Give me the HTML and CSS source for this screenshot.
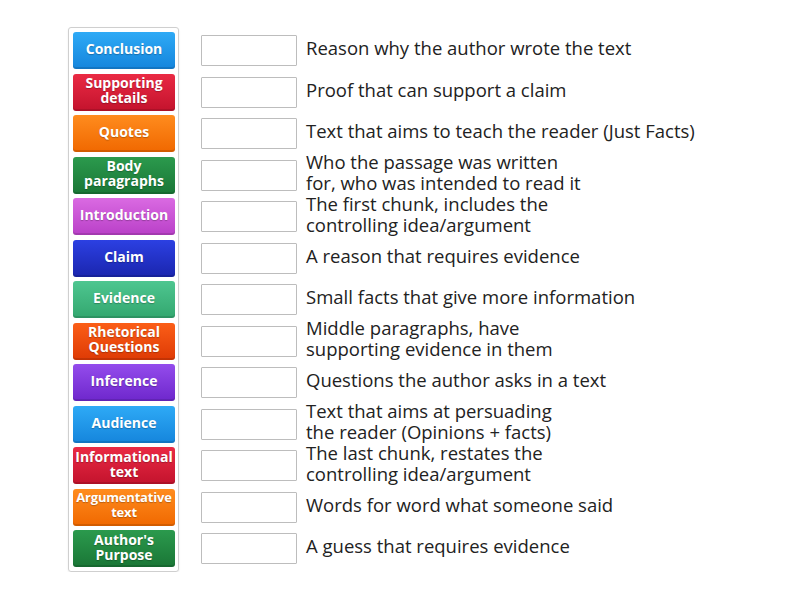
FILE: index.html
```html
<!DOCTYPE html>
<html>
<head>
<meta charset="utf-8">
<link rel="stylesheet" href="styles.css">
</head>
<body>
<div class="page">
  <div class="panel">
    <div class="tile blue">Conclusion</div>
    <div class="tile red">Supporting details</div>
    <div class="tile orange">Quotes</div>
    <div class="tile green">Body paragraphs</div>
    <div class="tile pink">Introduction</div>
    <div class="tile navy">Claim</div>
    <div class="tile teal">Evidence</div>
    <div class="tile redorange">Rhetorical Questions</div>
    <div class="tile purple">Inference</div>
    <div class="tile blue">Audience</div>
    <div class="tile red">Informational text</div>
    <div class="tile orange small">Argumentative text</div>
    <div class="tile green">Author's Purpose</div>
  </div>
  <div class="rows">
    <div class="row"><div class="slot"></div><div class="def">Reason why the author wrote the text</div></div>
    <div class="row"><div class="slot"></div><div class="def">Proof that can support a claim</div></div>
    <div class="row"><div class="slot"></div><div class="def">Text that aims to teach the reader (Just Facts)</div></div>
    <div class="row"><div class="slot"></div><div class="def">Who the passage was written<br>for, who was intended to read it</div></div>
    <div class="row"><div class="slot"></div><div class="def">The first chunk, includes the<br>controlling idea/argument</div></div>
    <div class="row"><div class="slot"></div><div class="def">A reason that requires evidence</div></div>
    <div class="row"><div class="slot"></div><div class="def">Small facts that give more information</div></div>
    <div class="row"><div class="slot"></div><div class="def">Middle paragraphs, have<br>supporting evidence in them</div></div>
    <div class="row"><div class="slot"></div><div class="def">Questions the author asks in a text</div></div>
    <div class="row"><div class="slot"></div><div class="def">Text that aims at persuading<br>the reader (Opinions + facts)</div></div>
    <div class="row"><div class="slot"></div><div class="def">The last chunk, restates the<br>controlling idea/argument</div></div>
    <div class="row"><div class="slot"></div><div class="def">Words for word what someone said</div></div>
    <div class="row"><div class="slot"></div><div class="def">A guess that requires evidence</div></div>
  </div>
</div>
</body>
</html>
```
FILE: styles.css
```css
html, body {
  margin: 0;
  padding: 0;
  background: #ffffff;
}
body {
  font-family: "Open Sans", "Liberation Sans", sans-serif;
}
.page {
  display: flex;
  align-items: flex-start;
  gap: 22px;
  padding: 27px 0 0 68px;
}
.panel {
  display: flex;
  flex-direction: column;
  gap: 4.5px;
  width: 102px;
  padding: 4px 3px 4px 4px;
  border: 1px solid #cfcfcf;
  border-radius: 3px;
  box-shadow: 0 1px 2px rgba(0,0,0,0.08);
}
.tile {
  height: 37px;
  display: flex;
  align-items: center;
  justify-content: center;
  text-align: center;
  color: #ffffff;
  font-weight: 700;
  font-size: 14px;
  line-height: 15px;
  border-radius: 3px;
  box-sizing: border-box;
  padding: 0 2px 4px;
  text-shadow: 0 1px 1px rgba(0,0,0,0.25);
  box-shadow: inset 0 -2px 0 rgba(0,0,0,0.12);
}
.tile.small { font-size: 13px; letter-spacing: -0.2px; }
.blue { background: linear-gradient(#2eaaf6, #1585dc); }
.red { background: linear-gradient(#ea2a44, #c3132d); }
.orange { background: linear-gradient(#ff8c1e, #f06800); }
.green { background: linear-gradient(#2b9a4d, #1a7636); }
.pink { background: linear-gradient(#da6ae2, #b940c8); }
.navy { background: linear-gradient(#2c40e2, #1a25ae); }
.teal { background: linear-gradient(#4ec690, #33a76f); }
.redorange { background: linear-gradient(#fb5e17, #de3a05); }
.purple { background: linear-gradient(#944cec, #6e27cc); }
.rows {
  display: flex;
  flex-direction: column;
  gap: 4.5px;
  padding-top: 5px;
}
.row {
  height: 37px;
  display: flex;
  align-items: center;
  gap: 9px;
}
.slot {
  width: 94px;
  height: 29px;
  border: 1px solid #bdbdbd;
  border-radius: 1px;
  flex-shrink: 0;
}
.def {
  font-size: 18.5px;
  line-height: 21px;
  padding-bottom: 6px;
  color: #222222;
  white-space: nowrap;
}
```
